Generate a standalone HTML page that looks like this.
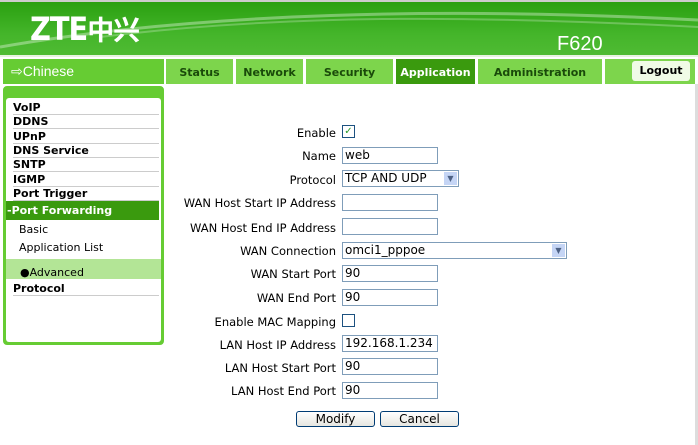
<!DOCTYPE html>
<html><head><meta charset="utf-8"><style>
*{margin:0;padding:0;box-sizing:border-box}
body{width:698px;height:445px;background:#fff;position:relative;overflow:hidden;font-family:"DejaVu Sans","Liberation Sans",sans-serif;font-size:11.5px;color:#000}
.a{position:absolute}
#hdr{left:0;top:0;width:698px;height:57px;background:linear-gradient(180deg,#2aa010 0%,#44b52a 60%,#4fbb33 100%);border-top:2px solid #ccc;border-bottom:2px solid #e8f3e0;overflow:hidden}
#logo{left:30px;top:7px;color:#fff;font:bold 32px "DejaVu Sans Condensed","Liberation Sans Narrow",sans-serif;letter-spacing:-1px}
#model{left:557px;top:31px;color:#fff;font:20px "Liberation Sans",sans-serif}
.tab{top:59px;height:25px;background:#7dd54c;color:#1a4a0a;font-weight:bold;text-align:center;line-height:27px;font-size:11px}
#side{left:3px;top:86px;width:161px;height:259px;border:1px solid #66cc33;border-radius:4px;background:#66cc33}
#sidein{left:2px;top:11px;width:155px;height:244px;background:#fff;border-radius:3px}
.it{left:13px;font-weight:bold;font-size:11px;width:146px;border-bottom:1px solid #ccc;height:14.3px;line-height:14px}
.lb{right:362px;text-align:right;white-space:nowrap}
.in{left:342px;width:96px;height:17px;border:1px solid #7f9db9;padding-left:2px;line-height:15px;font-size:12px}
.btn{top:411px;height:16px;border:1px solid #003c74;border-radius:3px;background:linear-gradient(#fff,#e6e6e0);text-align:center;line-height:14px;font-size:12px}
</style></head><body>
<div id="hdr" class="a">
<svg class="a" style="left:0;top:0" width="698" height="57"><path d="M0 45 C200 10 450 5 698 18" stroke="rgba(255,255,255,.35)" stroke-width="3" fill="none"/><path d="M100 35 C300 10 500 15 698 25" stroke="rgba(255,255,255,.25)" stroke-width="2" fill="none"/></svg>
<div id="logo" class="a">ZTE<span style="font-family:'Noto Sans CJK SC',sans-serif;font-size:27px">中兴</span></div>
<div id="model" class="a">F620</div>
</div>
<div class="a" style="left:3px;top:59px;width:161px;height:25px;background:#66cc33;color:#fff;font:14px 'Liberation Sans',sans-serif;line-height:24px;padding-left:8px">⇨Chinese</div>
<div class="a tab" style="left:166px;width:67px">Status</div>
<div class="a tab" style="left:236px;width:67px">Network</div>
<div class="a tab" style="left:306px;width:87px">Security</div>
<div class="a tab" style="left:396px;width:79px;background:#3a9a0e;color:#fff">Application</div>
<div class="a tab" style="left:478px;width:124px">Administration</div>
<div class="a tab" style="left:605px;width:90px"></div>
<div class="a" style="left:632px;top:61px;width:58px;height:20px;background:#f0fbe6;border-radius:3px;font-weight:bold;text-align:center;line-height:20px;font-size:11px">Logout</div>
<div id="side" class="a"><div id="sidein" class="a"></div></div>
<div class="a it" style="top:101px">VoIP</div>
<div class="a it" style="top:115px">DDNS</div>
<div class="a it" style="top:130px">UPnP</div>
<div class="a it" style="top:144px">DNS Service</div>
<div class="a it" style="top:158px">SNTP</div>
<div class="a it" style="top:173px">IGMP</div>
<div class="a it" style="top:187px">Port Trigger</div>
<div class="a" style="left:6px;top:201px;width:153px;height:19px;background:#3a9a0e;color:#fff;font-weight:bold;line-height:20px;padding-left:1px;font-size:11px">-Port Forwarding</div>
<div class="a" style="left:19px;top:223px;font-size:11px">Basic</div>
<div class="a" style="left:19px;top:241px;font-size:11px">Application List</div>
<div class="a" style="left:6px;top:259px;width:155px;height:20px;background:#b3e596;padding-left:14px;padding-top:7px;line-height:13px;font-size:11px">●Advanced</div>
<div class="a it" style="top:282px">Protocol</div>

<div class="a lb" style="top:126px">Enable</div>
<div class="a" style="left:342px;top:125px;width:13px;height:13px;border:1px solid #1c5180;color:#2a9a2a;font-size:10px;line-height:11px;text-align:center;font-weight:bold">✓</div>
<div class="a lb" style="top:149px">Name</div><div class="a in" style="top:147px">web</div>
<div class="a lb" style="top:173px">Protocol</div>
<div class="a in" style="top:170px;width:117px">TCP AND UDP<span class="a" style="right:1px;top:1px;width:13px;height:13px;background:#c5d5f5;font-size:8px;text-align:center;line-height:13px;color:#4d6185">▼</span></div>
<div class="a lb" style="top:196px">WAN Host Start IP Address</div><div class="a in" style="top:194px"></div>
<div class="a lb" style="top:221px">WAN Host End IP Address</div><div class="a in" style="top:218px"></div>
<div class="a lb" style="top:244px">WAN Connection</div>
<div class="a in" style="top:242px;width:225px">omci1_pppoe<span class="a" style="right:1px;top:1px;width:13px;height:13px;background:#c5d5f5;font-size:8px;text-align:center;line-height:13px;color:#4d6185">▼</span></div>
<div class="a lb" style="top:267px">WAN Start Port</div><div class="a in" style="top:265px">90</div>
<div class="a lb" style="top:291px">WAN End Port</div><div class="a in" style="top:289px">90</div>
<div class="a lb" style="top:315px">Enable MAC Mapping</div>
<div class="a" style="left:342px;top:314px;width:13px;height:13px;border:1px solid #1c5180"></div>
<div class="a lb" style="top:338px">LAN Host IP Address</div><div class="a in" style="top:335px">192.168.1.234</div>
<div class="a lb" style="top:361px">LAN Host Start Port</div><div class="a in" style="top:358px">90</div>
<div class="a lb" style="top:384px">LAN Host End Port</div><div class="a in" style="top:382px">90</div>
<div class="a btn" style="left:296px;width:79px">Modify</div>
<div class="a btn" style="left:380px;width:79px">Cancel</div>
<div class="a" style="left:695px;top:84px;width:3px;height:361px;background:#ddd"></div>
</body></html>
